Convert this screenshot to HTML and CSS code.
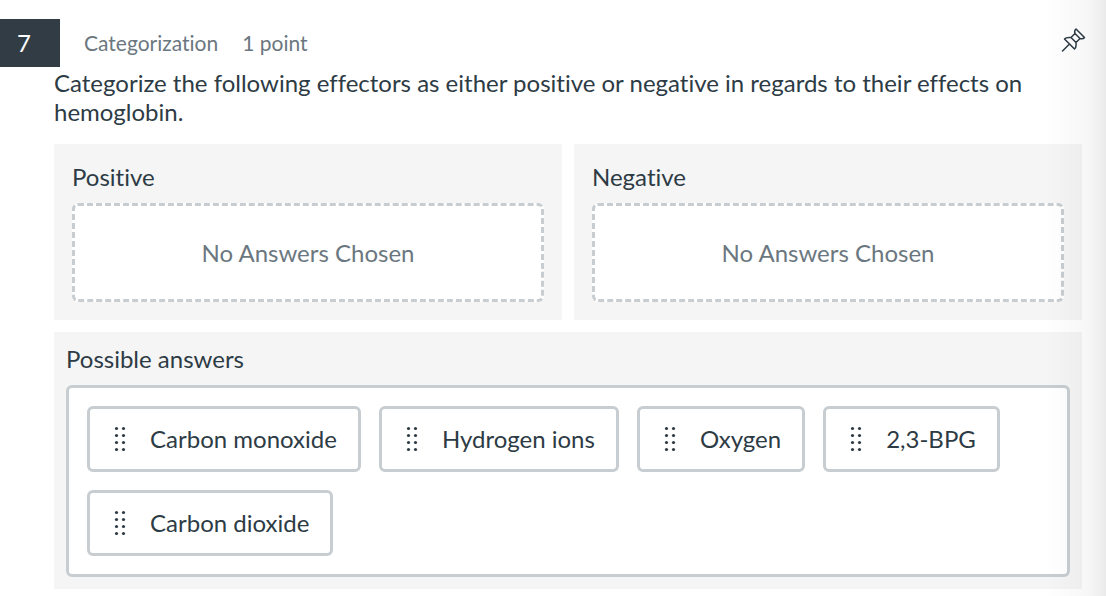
FILE: index.html
```
<!DOCTYPE html>
<html lang="en">
<head>
    <meta charset="UTF-8">
    <meta name="viewport" content="width=device-width, initial-scale=1.0">
    <title>Question 7</title>
    <link rel="stylesheet" href="styles.css">
</head>
<body>
    <svg class="sprite" aria-hidden="true">
        <symbol id="drag-handle" viewBox="0 0 12 28">
            <circle cx="2.500" cy="4.500" r="1.600"/>
            <circle cx="9.500" cy="4.500" r="1.600"/>
            <circle cx="2.500" cy="11.500" r="1.600"/>
            <circle cx="9.500" cy="11.500" r="1.600"/>
            <circle cx="2.500" cy="18.500" r="1.600"/>
            <circle cx="9.500" cy="18.500" r="1.600"/>
            <circle cx="2.500" cy="25.500" r="1.600"/>
            <circle cx="9.500" cy="25.500" r="1.600"/>
        </symbol>
    </svg>

    <main class="question">
        <header class="question-header">
            <span class="question-number">7</span>
            <span class="question-info">Categorization</span>
            <span class="question-info">1 point</span>
            <button type="button" class="pin-btn" aria-label="Pin question">
                <svg width="26" height="26" viewBox="0 0 26 26" aria-hidden="true">
                    <path d="M2.500 24L9 17.500M4.500 12Q6 10 11 10.500L15 6.500Q14 3.500 16 2L24.500 10.500Q23 12.500 20 11.500L16 15.500Q16.500 20.500 14.500 22ZM11 10.500L16 15.500M15 6.500L20 11.500"/>
                </svg>
            </button>
        </header>

        <div class="question-body">
            <p class="prompt">Categorize the following effectors as either positive or negative in regards to their effects on hemoglobin.</p>

            <div class="categories">
                <section class="category">
                    <h3>Positive</h3>
                    <div class="drop-zone">No Answers Chosen</div>
                </section>
                <section class="category">
                    <h3>Negative</h3>
                    <div class="drop-zone">No Answers Chosen</div>
                </section>
            </div>

            <section class="answers">
                <h3>Possible answers</h3>
                <div class="answer-list">
                    <button type="button" class="answer"><svg class="handle"><use href="#drag-handle"/></svg>Carbon monoxide</button>
                    <button type="button" class="answer"><svg class="handle"><use href="#drag-handle"/></svg>Hydrogen ions</button>
                    <button type="button" class="answer"><svg class="handle"><use href="#drag-handle"/></svg>Oxygen</button>
                    <button type="button" class="answer"><svg class="handle"><use href="#drag-handle"/></svg>2,3-BPG</button>
                    <button type="button" class="answer"><svg class="handle"><use href="#drag-handle"/></svg>Carbon dioxide</button>
                </div>
            </section>
        </div>
    </main>
    <div class="edge-shadow"></div>
</body>
</html>
```

FILE: styles.css
```
* {
    box-sizing: border-box;
}
body {
    margin: 0;
    background: #fff;
    color: #2d3b45;
    font-family: Lato, sans-serif;
    font-size: 24px;
    font-variant-ligatures: none;
    line-height: 29px;
}
h3,
p {
    margin: 0;
    font-size: 24px;
    font-weight: 400;
}
button {
    font: inherit;
    font-variant-ligatures: none;
    color: inherit;
    cursor: pointer;
}
.sprite {
    display: none;
}
.question {
    padding-top: 19px;
}
.question-header {
    display: flex;
    align-items: center;
    gap: 24px;
    padding-right: 20px;
}
.question-number {
    width: 60px;
    padding-right: 12px;
    background: #323c44;
    color: #fff;
    line-height: 48px;
    text-align: center;
}
.question-info {
    padding-bottom: 2px;
    color: #6b7780;
    font-size: 21px;
}
.pin-btn {
    display: flex;
    align-self: flex-start;
    margin: 8px 0 0 auto;
    padding: 0;
    border: none;
    background: none;
}
.pin-btn svg {
    fill: none;
    stroke: currentColor;
    stroke-width: 1.5;
    stroke-linejoin: round;
    stroke-linecap: round;
}
.question-body {
    padding: 1px 24px 7px 54px;
}
.prompt {
    margin-bottom: 18px;
}
.categories {
    display: grid;
    grid-template-columns: 1fr 1fr;
    gap: 12px;
    margin-bottom: 12px;
}
.category {
    padding: 18px;
    background: #f5f5f5;
}
.category h3,
.answers h3 {
    margin-bottom: 12px;
}
.drop-zone {
    padding: 32px 18px;
    border: 3px dashed #c7cdd1;
    border-radius: 6px;
    background: #fff;
    color: #6b7780;
    text-align: center;
}
.answers {
    padding: 12px;
    background: #f5f5f5;
}
.answer-list {
    display: flex;
    flex-wrap: wrap;
    gap: 18px;
    padding: 18px;
    border: 3px solid #c7cdd1;
    border-radius: 6px;
    background: #fff;
}
.answer {
    display: flex;
    align-items: center;
    height: 66px;
    padding: 0 21px 2px 24px;
    border: 3px solid #c7cdd1;
    border-radius: 6px;
    background: #fff;
}
.handle {
    width: 12px;
    height: 28px;
    margin-right: 24px;
    fill: #2d3b45;
}
/* soft shade along the right side of the window */
.edge-shadow {
    position: fixed;
    top: 0;
    right: 0;
    bottom: 0;
    width: 60px;
    background: linear-gradient(to right, rgba(0, 0, 0, 0), rgba(0, 0, 0, 0.03) 70%, rgba(0, 0, 0, 0.08));
    pointer-events: none;
}
```
